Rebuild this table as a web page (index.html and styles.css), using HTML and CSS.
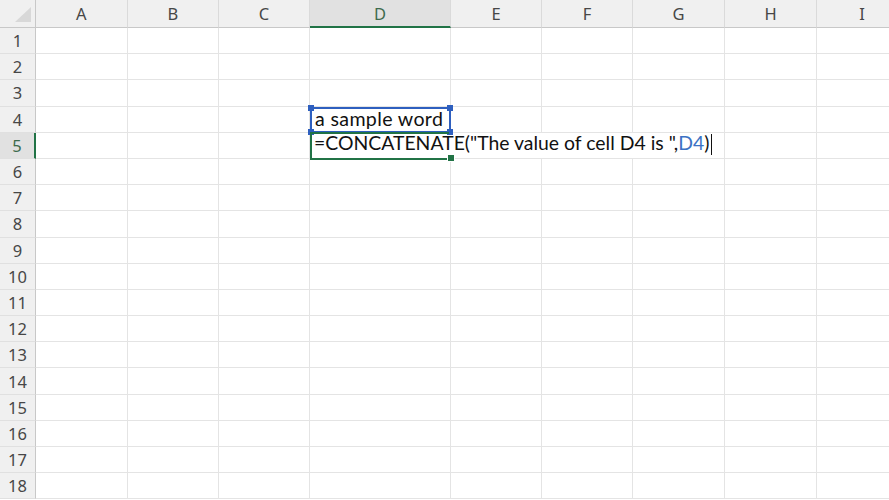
FILE: index.html
```html
<!DOCTYPE html>
<html>
<head>
<meta charset="utf-8">
<link rel="stylesheet" href="styles.css">
</head>
<body>
<div class="sheet">
  <div class="row head">
    <div class="corner"><span class="tri"></span></div>
    <div class="ch">A</div><div class="ch">B</div><div class="ch">C</div><div class="ch sel">D</div><div class="ch">E</div><div class="ch">F</div><div class="ch">G</div><div class="ch">H</div><div class="ch">I</div>
  </div>
  <div class="row"><div class="rh">1</div><div class="c"></div><div class="c"></div><div class="c"></div><div class="c"></div><div class="c"></div><div class="c"></div><div class="c"></div><div class="c"></div><div class="c"></div></div>
  <div class="row"><div class="rh">2</div><div class="c"></div><div class="c"></div><div class="c"></div><div class="c"></div><div class="c"></div><div class="c"></div><div class="c"></div><div class="c"></div><div class="c"></div></div>
  <div class="row"><div class="rh">3</div><div class="c"></div><div class="c"></div><div class="c"></div><div class="c"></div><div class="c"></div><div class="c"></div><div class="c"></div><div class="c"></div><div class="c"></div></div>
  <div class="row"><div class="rh">4</div><div class="c"></div><div class="c"></div><div class="c"></div>
    <div class="c d4"><span class="val">a sample word</span><span class="ref"><i class="k tl"></i><i class="k tr"></i><i class="k bl"></i><i class="k br"></i></span></div>
    <div class="c"></div><div class="c"></div><div class="c"></div><div class="c"></div><div class="c"></div></div>
  <div class="row"><div class="rh sel">5</div><div class="c"></div><div class="c"></div><div class="c"></div>
    <div class="c d5"><span class="active"></span><span class="handle"></span><span class="edit">=CONCATENATE("The value of cell D4 is ",<span class="refd">D4</span>)<span class="caret"></span></span></div>
    <div class="c"></div><div class="c"></div></div>
  <div class="row"><div class="rh">6</div><div class="c"></div><div class="c"></div><div class="c"></div><div class="c"></div><div class="c"></div><div class="c"></div><div class="c"></div><div class="c"></div><div class="c"></div></div>
  <div class="row"><div class="rh">7</div><div class="c"></div><div class="c"></div><div class="c"></div><div class="c"></div><div class="c"></div><div class="c"></div><div class="c"></div><div class="c"></div><div class="c"></div></div>
  <div class="row"><div class="rh">8</div><div class="c"></div><div class="c"></div><div class="c"></div><div class="c"></div><div class="c"></div><div class="c"></div><div class="c"></div><div class="c"></div><div class="c"></div></div>
  <div class="row"><div class="rh">9</div><div class="c"></div><div class="c"></div><div class="c"></div><div class="c"></div><div class="c"></div><div class="c"></div><div class="c"></div><div class="c"></div><div class="c"></div></div>
  <div class="row"><div class="rh">10</div><div class="c"></div><div class="c"></div><div class="c"></div><div class="c"></div><div class="c"></div><div class="c"></div><div class="c"></div><div class="c"></div><div class="c"></div></div>
  <div class="row"><div class="rh">11</div><div class="c"></div><div class="c"></div><div class="c"></div><div class="c"></div><div class="c"></div><div class="c"></div><div class="c"></div><div class="c"></div><div class="c"></div></div>
  <div class="row"><div class="rh">12</div><div class="c"></div><div class="c"></div><div class="c"></div><div class="c"></div><div class="c"></div><div class="c"></div><div class="c"></div><div class="c"></div><div class="c"></div></div>
  <div class="row"><div class="rh">13</div><div class="c"></div><div class="c"></div><div class="c"></div><div class="c"></div><div class="c"></div><div class="c"></div><div class="c"></div><div class="c"></div><div class="c"></div></div>
  <div class="row"><div class="rh">14</div><div class="c"></div><div class="c"></div><div class="c"></div><div class="c"></div><div class="c"></div><div class="c"></div><div class="c"></div><div class="c"></div><div class="c"></div></div>
  <div class="row"><div class="rh">15</div><div class="c"></div><div class="c"></div><div class="c"></div><div class="c"></div><div class="c"></div><div class="c"></div><div class="c"></div><div class="c"></div><div class="c"></div></div>
  <div class="row"><div class="rh">16</div><div class="c"></div><div class="c"></div><div class="c"></div><div class="c"></div><div class="c"></div><div class="c"></div><div class="c"></div><div class="c"></div><div class="c"></div></div>
  <div class="row"><div class="rh">17</div><div class="c"></div><div class="c"></div><div class="c"></div><div class="c"></div><div class="c"></div><div class="c"></div><div class="c"></div><div class="c"></div><div class="c"></div></div>
  <div class="row"><div class="rh">18</div><div class="c"></div><div class="c"></div><div class="c"></div><div class="c"></div><div class="c"></div><div class="c"></div><div class="c"></div><div class="c"></div><div class="c"></div></div>
</div>
</body>
</html>
```
FILE: styles.css
```css
html, body {
  margin: 0;
  padding: 0;
  background: #ffffff;
  overflow: hidden;
}
.sheet {
  width: 908px;
  height: 500px;
  overflow: hidden;
}
.row {
  display: grid;
  grid-template-columns: 36px 91.5px 91.5px 91px 141px 91px 91px 92px 92px 91px;
  height: 26.2px;
}
.row.head {
  height: 28px;
}
.row > div {
  box-sizing: border-box;
}
.corner {
  position: relative;
  background: #f0f0f0;
  border-right: 1px solid #c8c8c8;
  border-bottom: 1px solid #c8c8c8;
}
.tri {
  position: absolute;
  right: 4px;
  bottom: 5px;
  width: 0;
  height: 0;
  border-left: 16px solid transparent;
  border-bottom: 15px solid #d8d8d8;
}
.ch {
  background: #f0f0f0;
  border-right: 1px solid #dadada;
  border-bottom: 1px solid #c8c8c8;
  display: flex;
  align-items: center;
  justify-content: center;
  font-family: "Noto Sans", "Open Sans", sans-serif;
  font-size: 16.5px;
  color: #474747;
}
.ch.sel {
  background: #e1e1e1;
  border-bottom: 2px solid #217346;
  color: #3d6b4d;
}
.rh {
  background: #f0f0f0;
  border-right: 1px solid #c8c8c8;
  border-bottom: 1px solid #e0e0e0;
  display: flex;
  align-items: center;
  justify-content: center;
  font-family: "Noto Sans", "Open Sans", sans-serif;
  font-size: 16.5px;
  color: #474747;
}
.rh.sel {
  background: #e1e1e1;
  border-right: 2px solid #217346;
  color: #3d6b4d;
}
.c {
  border-right: 1px solid #e4e4e4;
  border-bottom: 1px solid #e4e4e4;
}
.d4 {
  position: relative;
  display: flex;
  align-items: flex-end;
  font-family: "Lato", "Liberation Sans", sans-serif;
  font-size: 19.6px;
  color: #111;
}
.d4 .val {
  padding: 0 0 3px 5px;
  line-height: 1;
  letter-spacing: 0.35px;
  white-space: nowrap;
}
.ref {
  position: absolute;
  left: 0;
  top: 0;
  right: -1px;
  bottom: -1px;
  border: 2px solid #2e5fbf;
}
.k {
  position: absolute;
  width: 6px;
  height: 6px;
  background: #2e5fbf;
}
.k.tl { left: -4px; top: -4px; }
.k.tr { right: -4px; top: -4px; }
.k.bl { left: -4px; bottom: -4px; }
.k.br { right: -4px; bottom: -4px; }
.d5 {
  grid-column: span 4;
  position: relative;
  display: flex;
  align-items: flex-end;
  font-family: "Lato", "Liberation Sans", sans-serif;
  font-size: 19.4px;
  color: #111;
}
.active {
  position: absolute;
  left: 0;
  top: -1px;
  width: 137px;
  bottom: -2px;
  border: 2px solid #217346;
  border-right: none;
}
.handle {
  position: absolute;
  left: 137px;
  bottom: -4px;
  width: 6px;
  height: 6px;
  background: #217346;
  border: 1px solid #fff;
}
.edit {
  position: relative;
  padding: 0 0 6px 4px;
  line-height: 1;
  white-space: nowrap;
  display: flex;
  align-items: flex-end;
}
.refd {
  color: #3b72c4;
}
.caret {
  display: inline-block;
  width: 1px;
  height: 21px;
  background: #111;
  margin-left: 2px;
  margin-bottom: -3px;
}
```
